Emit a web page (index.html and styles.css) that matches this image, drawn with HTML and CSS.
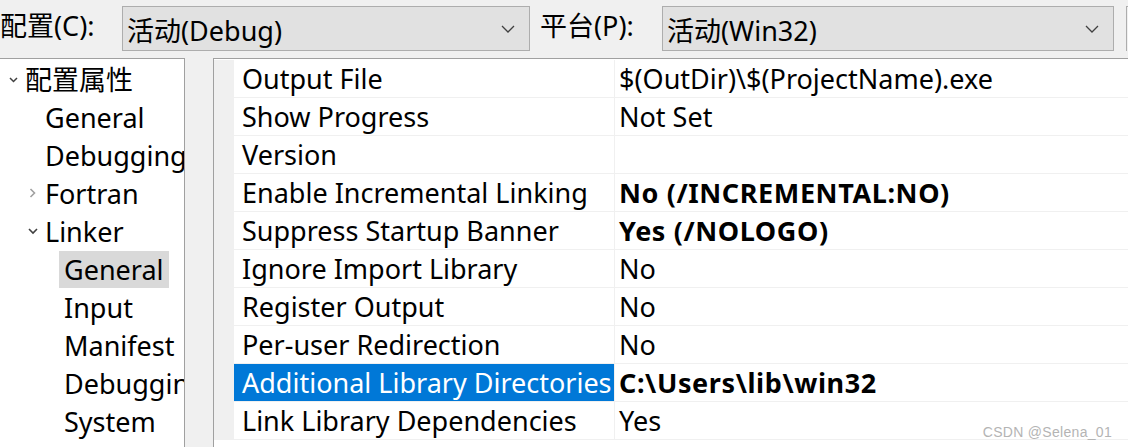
FILE: index.html
```html
<!DOCTYPE html>
<html lang="zh">
<head>
<meta charset="utf-8">
<link rel="stylesheet" href="styles.css">
</head>
<body>
<div class="topbar">
  <div class="label l1">配置(C):</div>
  <div class="select s1"><span>活动(Debug)</span><svg class="chev" width="14" height="8" viewBox="0 0 14 8"><path d="M1 1 L7 7 L13 1" fill="none" stroke="#404040" stroke-width="1.3"/></svg></div>
  <div class="label l2">平台(P):</div>
  <div class="select s2"><span>活动(Win32)</span><svg class="chev" width="14" height="8" viewBox="0 0 14 8"><path d="M1 1 L7 7 L13 1" fill="none" stroke="#404040" stroke-width="1.3"/></svg></div>
  <div class="stub"></div>
</div>
<div class="main">
  <div class="tree">
    <div class="node lv0"><svg class="exp" width="9" height="6" viewBox="0 0 9 6"><path d="M1 1 L4.5 4.5 L8 1" fill="none" stroke="#404040" stroke-width="1.5"/></svg><span>配置属性</span></div>
    <div class="node lv1"><span>General</span></div>
    <div class="node lv1"><span>Debugging</span></div>
    <div class="node lv1"><svg class="col" width="8" height="10" viewBox="0 0 8 10"><path d="M1.5 1 L5.5 5 L1.5 9" fill="none" stroke="#a0a0a0" stroke-width="1.6"/></svg><span>Fortran</span></div>
    <div class="node lv1"><svg class="exp2" width="10" height="7" viewBox="0 0 10 7"><path d="M1 1 L5 5 L9 1" fill="none" stroke="#404040" stroke-width="1.6"/></svg><span>Linker</span></div>
    <div class="node lv2"><span class="sel">General</span></div>
    <div class="node lv2"><span>Input</span></div>
    <div class="node lv2"><span>Manifest</span></div>
    <div class="node lv2"><span>Debugging</span></div>
    <div class="node lv2"><span>System</span></div>
  </div>
  <div class="grid">
    <div class="row"><div class="name">Output File</div><div class="val">$(OutDir)\$(ProjectName).exe</div></div>
    <div class="row"><div class="name">Show Progress</div><div class="val">Not Set</div></div>
    <div class="row"><div class="name">Version</div><div class="val"></div></div>
    <div class="row"><div class="name">Enable Incremental Linking</div><div class="val b">No (/INCREMENTAL:NO)</div></div>
    <div class="row"><div class="name">Suppress Startup Banner</div><div class="val b">Yes (/NOLOGO)</div></div>
    <div class="row"><div class="name">Ignore Import Library</div><div class="val">No</div></div>
    <div class="row"><div class="name">Register Output</div><div class="val">No</div></div>
    <div class="row"><div class="name">Per-user Redirection</div><div class="val">No</div></div>
    <div class="row active"><div class="name">Additional Library Directories</div><div class="val b">C:\Users\lib\win32</div></div>
    <div class="row"><div class="name">Link Library Dependencies</div><div class="val">Yes</div></div>
  </div>
</div>
<div class="mark">CSDN @Selena_01</div>
</body>
</html>
```
FILE: styles.css
```css
html, body {
  margin: 0;
  padding: 0;
  width: 1128px;
  height: 447px;
  overflow: hidden;
  background: #f0f0f0;
  font-family: "Noto Sans", "Noto Sans CJK SC", sans-serif;
  color: #000;
  position: relative;
}
.topbar {
  display: flex;
  align-items: center;
  height: 58px;
  font-size: 27px;
}
.label {
  white-space: nowrap;
  line-height: 30px;
  margin-top: -6px;
}
.l1 { width: 122px; }
.l2 { width: 122px; padding-left: 10px; }
.select {
  box-sizing: border-box;
  height: 45px;
  margin-top: -2px;
  background: #e1e1e1;
  border: 1px solid #adadad;
  display: flex;
  align-items: center;
  justify-content: space-between;
  padding: 0 14px 0 4px;
  white-space: nowrap;
}
.select span { margin-top: 2px; }
.s1 { width: 408px; }
.s2 { width: 452px; }
.chev { margin-top: 2px; }
.stub {
  margin-left: 12px;
  flex: 1;
  height: 45px;
  margin-top: -2px;
  border-left: 1px solid #adadad;
  border-top: 1px solid #adadad;
  box-sizing: border-box;
}
.main {
  display: flex;
  gap: 28px;
  height: 389px;
  font-size: 27px;
}
.tree {
  box-sizing: border-box;
  width: 185px;
  background: #fff;
  border-top: 1px solid #a0a0a0;
  border-right: 1px solid #a0a0a0;
  padding-top: 1px;
  overflow: hidden;
}
.node {
  height: 38px;
  display: flex;
  align-items: center;
  white-space: nowrap;
  position: relative;
}
.node span { line-height: 37px; }
.lv0 { padding-left: 9px; }
.lv0 .exp { margin-right: 7px; margin-top: 2px; }
.lv1 { padding-left: 45px; }
.lv2 { padding-left: 59px; }
.lv2 span { padding: 0 5px; }
.lv2 .sel { background: #d9d9d9; }
.col { position: absolute; left: 29px; top: 14px; }
.exp2 { position: absolute; left: 28px; top: 16px; }
.grid {
  flex: 1;
  box-sizing: border-box;
  background: #fff;
  border-top: 1px solid #a0a0a0;
  border-left: 1px solid #a0a0a0;
  padding-top: 1px;
}
.row {
  display: grid;
  grid-template-columns: 20px 381px 1fr;
  height: 38px;
  box-sizing: border-box;
  border-bottom: 1px solid #f0f0f0;
  white-space: nowrap;
}
.row::before {
  content: "";
  background: #f0f0f0;
  margin-bottom: -1px;
}
.name {
  padding-left: 8px;
  line-height: 37px;
  overflow: hidden;
  border-right: 1px solid #f0f0f0;
}
.val {
  padding-left: 4px;
  line-height: 37px;
  overflow: hidden;
}
.b { font-weight: bold; letter-spacing: 0.6px; }
.active .name {
  background: #0078d7;
  color: #fff;
}
.mark {
  position: absolute;
  right: 16px;
  bottom: 7px;
  font-family: "Liberation Sans", Arial, sans-serif;
  font-size: 14px;
  color: #b4b4b4;
  letter-spacing: 0.3px;
}
```
